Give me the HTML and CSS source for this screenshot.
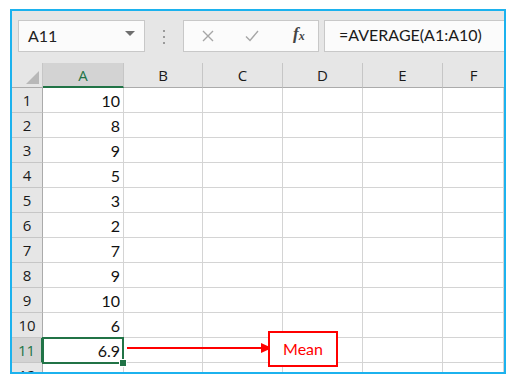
FILE: index.html
```html
<!DOCTYPE html>
<html lang="en">
<head>
  <meta charset="UTF-8" />
  <title>Excel AVERAGE</title>
  <link rel="stylesheet" href="styles.css">
</head>
<body>
<div class="frame">
  <div class="toolbar">
    <div class="namebox">
      <span>A11</span>
      <span class="caret"></span>
    </div>
    <div class="grip"><i></i><i></i><i></i></div>
    <div class="actions">
      <svg class="btn-x" width="12" height="12" viewBox="0 0 12 12"><path d="M1 1 L11 11 M11 1 L1 11" stroke="#a6a6a6" stroke-width="1.4" fill="none"/></svg>
      <svg class="btn-ok" width="14" height="12" viewBox="0 0 14 12"><path d="M1 6.5 L5 10.5 L13 1" stroke="#a6a6a6" stroke-width="1.4" fill="none"/></svg>
      <span class="fx">f<sub>x</sub></span>
    </div>
    <div class="formula">=AVERAGE(A1:A10)</div>
  </div>

  <div class="sheet">
    <div class="corner"><span class="tri"></span></div>
    <div class="col-head active">A</div>
    <div class="col-head">B</div>
    <div class="col-head">C</div>
    <div class="col-head">D</div>
    <div class="col-head">E</div>
    <div class="col-head last">F</div>

    <div class="row-head">1</div><div class="cell num">10</div><div class="cell"></div><div class="cell"></div><div class="cell"></div><div class="cell"></div><div class="cell"></div>
    <div class="row-head">2</div><div class="cell num">8</div><div class="cell"></div><div class="cell"></div><div class="cell"></div><div class="cell"></div><div class="cell"></div>
    <div class="row-head">3</div><div class="cell num">9</div><div class="cell"></div><div class="cell"></div><div class="cell"></div><div class="cell"></div><div class="cell"></div>
    <div class="row-head">4</div><div class="cell num">5</div><div class="cell"></div><div class="cell"></div><div class="cell"></div><div class="cell"></div><div class="cell"></div>
    <div class="row-head">5</div><div class="cell num">3</div><div class="cell"></div><div class="cell"></div><div class="cell"></div><div class="cell"></div><div class="cell"></div>
    <div class="row-head">6</div><div class="cell num">2</div><div class="cell"></div><div class="cell"></div><div class="cell"></div><div class="cell"></div><div class="cell"></div>
    <div class="row-head">7</div><div class="cell num">7</div><div class="cell"></div><div class="cell"></div><div class="cell"></div><div class="cell"></div><div class="cell"></div>
    <div class="row-head">8</div><div class="cell num">9</div><div class="cell"></div><div class="cell"></div><div class="cell"></div><div class="cell"></div><div class="cell"></div>
    <div class="row-head">9</div><div class="cell num">10</div><div class="cell"></div><div class="cell"></div><div class="cell"></div><div class="cell"></div><div class="cell"></div>
    <div class="row-head">10</div><div class="cell num">6</div><div class="cell"></div><div class="cell"></div><div class="cell"></div><div class="cell"></div><div class="cell"></div>
    <div class="row-head active">11</div><div class="cell num selected">6.9<span class="handle"></span></div><div class="cell"></div><div class="cell"></div><div class="cell"></div><div class="cell"></div><div class="cell"></div>
    <div class="row-head">12</div><div class="cell"></div><div class="cell"></div><div class="cell"></div><div class="cell"></div><div class="cell"></div><div class="cell"></div>
  </div>

  <!-- annotation -->
  <svg class="arrow" width="146" height="12" viewBox="0 0 146 12">
    <line x1="0" y1="6" x2="136" y2="6" stroke="#ff0000" stroke-width="2"/>
    <polygon points="134,1 145,6 134,11" fill="#ff0000"/>
  </svg>
  <div class="callout">Mean</div>
</div>
</body>
</html>
```

FILE: styles.css
```css
body {
  margin: 0;
  background: #fff;
  font-family: Lato, "Open Sans", sans-serif;
}

.frame {
  position: relative;
  margin: 9px 0 0 10px;
  width: 492px;
  height: 361px;
  border: 2px solid #1cb2ee;
  overflow: hidden;
  background: #e6e6e6;
}

.toolbar {
  display: flex;
  align-items: flex-start;
  height: 52px;
  padding: 9px 0 0 6px;
  box-sizing: border-box;
}

.namebox {
  width: 127px;
  height: 32px;
  box-sizing: border-box;
  background: #fbfbfb;
  border: 1px solid #c8c8c8;
  display: flex;
  align-items: center;
  justify-content: space-between;
  padding: 0 9px 2px 9px;
  font-size: 16px;
  color: #222;
}

.caret {
  width: 0;
  height: 0;
  border-left: 5px solid transparent;
  border-right: 5px solid transparent;
  border-top: 5px solid #6e6e6e;
  margin-bottom: 4px;
}

.grip {
  width: 38px;
  display: flex;
  flex-direction: column;
  align-items: center;
  gap: 4px;
  padding-top: 10px;
}

.grip i {
  width: 2px;
  height: 2px;
  background: #9a9a9a;
}

.actions {
  width: 136px;
  height: 32px;
  box-sizing: border-box;
  background: #fbfbfb;
  border: 1px solid #c8c8c8;
  display: flex;
  align-items: center;
  padding-left: 18px;
}

.btn-ok {
  margin-left: 31px;
}

.fx {
  margin-left: 34px;
  font-family: "Liberation Serif", serif;
  font-style: italic;
  font-weight: bold;
  font-size: 17px;
  color: #444;
  margin-bottom: 4px;
}

.fx sub {
  font-size: 12px;
  vertical-align: -1px;
}

.formula {
  flex: 1;
  margin-left: 5px;
  height: 32px;
  box-sizing: border-box;
  background: #fbfbfb;
  border: 1px solid #c8c8c8;
  border-right: none;
  padding: 4px 0 0 14px;
  font-size: 16px;
  color: #1a1a1a;
}

.sheet {
  display: grid;
  grid-template-columns: 31px 81px 79px 80px 80px 80px 1fr;
  grid-auto-rows: 25px;
  background: #fff;
}

.corner,
.col-head,
.row-head {
  background: #e6e6e6;
  color: #1a1a1a;
  font-family: "Open Sans", sans-serif;
  font-size: 15px;
  display: flex;
  align-items: center;
  justify-content: center;
  box-sizing: border-box;
}

.corner {
  position: relative;
  border-right: 1px solid #c6c6c6;
  border-bottom: 1px solid #ababab;
}

.tri {
  position: absolute;
  right: 3px;
  bottom: 3px;
  width: 0;
  height: 0;
  border-left: 13px solid transparent;
  border-bottom: 13px solid #b8b8b8;
}

.col-head {
  border-right: 1px solid #c6c6c6;
  border-bottom: 1px solid #ababab;
}

.col-head.last {
  border-right: none;
}

.col-head.active {
  background: #d3d3d3;
  color: #217346;
  border-bottom: 2px solid #217346;
}

.row-head {
  border-right: 1px solid #ababab;
  border-bottom: 1px solid #c6c6c6;
}

.row-head.active {
  background: #d3d3d3;
  color: #217346;
  border-right: 2px solid #217346;
}

.cell {
  border-right: 1px solid #d4d4d4;
  border-bottom: 1px solid #d4d4d4;
  box-sizing: border-box;
  font-size: 16px;
  color: #111;
}

.cell.num {
  display: flex;
  align-items: center;
  justify-content: flex-end;
  padding-right: 3px;
}

.cell.selected {
  position: relative;
  border: 2px solid #217346;
  margin: -1px 0 -1px -1px;
  padding-right: 2px;
}

.handle {
  position: absolute;
  right: -5px;
  bottom: -5px;
  width: 6px;
  height: 6px;
  background: #217346;
  border: 1px solid #fff;
}

.arrow {
  position: absolute;
  left: 115px;
  top: 331px;
}

.callout {
  position: absolute;
  left: 256px;
  top: 320px;
  width: 70px;
  height: 36px;
  box-sizing: border-box;
  border: 2px solid #ff0000;
  background: #fff;
  color: #ff0000;
  font-size: 16px;
  display: flex;
  align-items: center;
  justify-content: center;
  padding-bottom: 1px;
}
```
